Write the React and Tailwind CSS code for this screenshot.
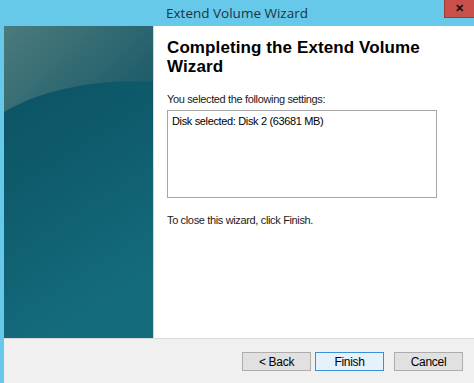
import React from "react";

const Sidebar = () => (
  <div className="w-[149px] h-full shrink-0 bg-[#0f5868]">
    <svg width="149" height="312" viewBox="0 0 149 312" className="block">
      <defs>
        <linearGradient id="base" x1="0" y1="0" x2="0.3" y2="1">
          <stop offset="0" stopColor="#0b4f60" />
          <stop offset="0.5" stopColor="#0e5b6c" />
          <stop offset="1" stopColor="#146b7c" />
        </linearGradient>
        <linearGradient id="cap" x1="0" y1="0" x2="1" y2="0.6">
          <stop offset="0" stopColor="#4b7b7d" />
          <stop offset="1" stopColor="#1f5d6a" />
        </linearGradient>
      </defs>
      <rect width="149" height="312" fill="url(#base)" />
      <path d="M0 0 H149 V56 C100 52 40 62 0 86 Z" fill="url(#cap)" />
    </svg>
  </div>
);

const Btn = ({ children, active }) => (
  <button
    className={`w-[69px] h-[19px] text-[12px] text-black tracking-[-0.3px] border ${
      active ? "border-[#3c8fd6] bg-[#e5f1fb]" : "border-[#adadad] bg-[#e1e1e1]"
    }`}
  >
    {children}
  </button>
);

export default function App() {
  return (
    <div
      className="w-[474px] h-[383px] flex flex-col bg-[#66c9e9] overflow-hidden"
      style={{ fontFamily: "'Liberation Sans', Arial, sans-serif" }}
    >
      {/* title bar */}
      <div className="h-[26px] relative flex items-center justify-center shrink-0">
        <span
          className="text-[13.5px] text-[#1b3447]"
          style={{ fontFamily: "'Open Sans', 'Noto Sans', sans-serif" }}
        >
          Extend Volume Wizard
        </span>
        <div className="absolute right-0 top-0 w-[30px] h-[18px] bg-[#c9504a] border-l border-b border-[#9a3a36] flex items-center justify-center text-[#111] text-[11px] font-bold">
          ✕
        </div>
      </div>

      <div className="flex-1 flex flex-col pl-[4px]">
        <div className="h-[312px] flex shrink-0">
          <Sidebar />
          <div className="flex-1 bg-white border-l border-[#d8d8d8] pl-[13px] pt-[12px]">
            <h1 className="text-[17px] font-bold leading-[19px] text-black w-[280px] tracking-[0.1px]">
              Completing the Extend Volume Wizard
            </h1>
            <p className="mt-[15px] text-[11px] text-[#1a1a1a] tracking-[-0.35px]">
              You selected the following settings:
            </p>
            <div className="mt-[2px] w-[270px] h-[88px] border border-[#a6a6a6] px-[4px] pt-[2px] text-[11px] text-black tracking-[-0.35px]">
              Disk selected: Disk 2 (63681 MB)
            </div>
            <p className="mt-[14px] text-[11px] text-[#1a1a1a] tracking-[-0.35px]">
              To close this wizard, click Finish.
            </p>
          </div>
        </div>
        <div className="flex-1 bg-[#f0f0f0] border-t border-[#dadada] flex items-start justify-end pt-[13px] pr-[11px] gap-[4px]">
          <Btn>&lt; Back</Btn>
          <Btn active>Finish</Btn>
          <div className="w-[2px]" />
          <Btn>Cancel</Btn>
        </div>
      </div>
    </div>
  );
}
